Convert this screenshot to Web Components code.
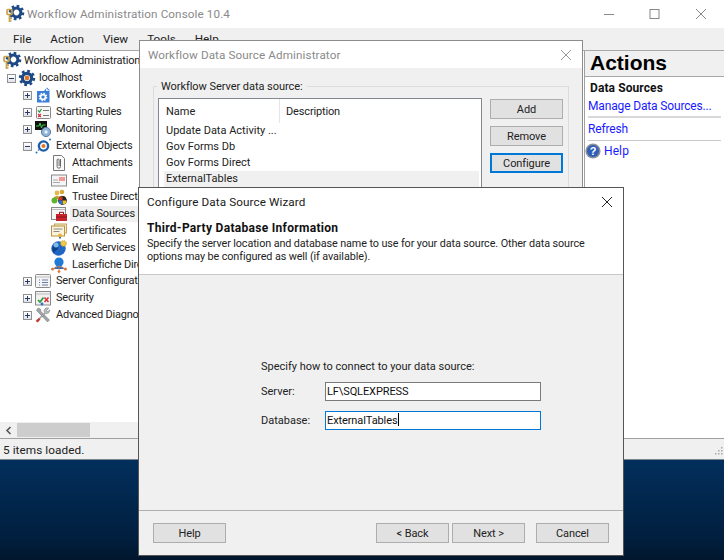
<!DOCTYPE html>
<html><head><meta charset="utf-8">
<style>
html,body{margin:0;padding:0;width:724px;height:560px;overflow:hidden;background:#01305f}
body{font:12px Roboto,sans-serif;color:#222}
</style></head><body>
<x-desktop>
  <x-main-window></x-main-window>
  <x-ds-admin></x-ds-admin>
  <x-wizard></x-wizard>
</x-desktop>
<script>
const FONT='Roboto,sans-serif';
const gear=(c,cx,cy,s)=>`<g transform="translate(${cx} ${cy}) scale(${s})"><circle r="6.6" fill="none" stroke="${c}" stroke-width="2.4" stroke-dasharray="2.6 2.58"/><circle r="4.4" fill="none" stroke="${c}" stroke-width="3"/></g>`;
const ICONS={
 app:`${gear('#1d4a86',10.5,6.5,1)}<circle cx="10.5" cy="6.5" r="1.8" fill="#fff"/><g fill="none" stroke="#c9a24a" stroke-width="1.7"><rect x="1" y="3.5" width="5" height="5" rx="1"/><path d="M3.5 8.5V16M3.5 12.5H6M3.5 15H5.5"/></g>`,
 local:`${gear('#1d4a86',8,8,1.05)}<circle cx="8" cy="8" r="2.4" fill="#e0742a"/>`,
 workflows:`<path d="M2 4 9 4 12 0.5 14.5 3V15.5H2Z" fill="#3b7fd8"/><path d="M11 1v3h3.5" fill="#dcecff"/>${gear('#fff',8,10,.55)}`,
 rules:`<rect x="1.5" y="2.5" width="14" height="12" rx="1" fill="#f6f6f6" stroke="#8a8a8a"/><path d="M3 6.5l1.5 1.5 2-3" stroke="#2a9a3a" stroke-width="1.2" fill="none"/><path d="M3.2 10l2.6 3M5.8 10l-2.6 3" stroke="#d8303a" stroke-width="1.2"/><path d="M8 6.5h6M8 11.5h6" stroke="#777"/>`,
 monitor:`<rect x="0" y="0" width="12" height="9" fill="#111"/><path d="M1 5h3l1-3 1.5 5 1-3h3" stroke="#3cd04a" fill="none"/><circle cx="11" cy="11" r="4.6" fill="#8fb4d8" stroke="#5c7c9e"/><circle cx="11" cy="11" r="1.7" fill="#e8f1fa"/>`,
 external:`<circle cx="8.5" cy="8" r="4.6" fill="#fff" stroke="#1d5fa8" stroke-width="2.4"/><circle cx="8.5" cy="8" r="2" fill="#e0742a"/><circle cx="15" cy="1.5" r="1" fill="#1d6fc8"/><circle cx="1.5" cy="14.5" r="1" fill="#1d6fc8"/><circle cx="3.5" cy="12" r=".8" fill="#1d6fc8"/>`,
 attach:`<path d="M2.5 .5h8l3 3v12h-11z" fill="#fafafa" stroke="#777"/><path d="M9.5 4v7.5a1.7 1.7 0 0 1-3.4 0V5a1 1 0 0 1 2 0v6" fill="none" stroke="#666"/>`,
 email:`<rect x=".5" y="3" width="15" height="11" fill="#f5f5f5" stroke="#8a8a8a"/><rect x="8" y="5" width="6" height="4" fill="#f29a9a"/><path d="M2 8h5M2 10.5h7" stroke="#aaa"/>`,
 trustee:`<circle cx="11" cy="3" r="2.3" fill="#d8a83a"/><path d="M7 9c0-3 8-3 8 0z" fill="#d8a83a"/><circle cx="6" cy="4" r="2.4" fill="#e6b84a"/><path d="M2.5 10c0-4 7-4 7 0z" fill="#c9962a"/><circle cx="3.5" cy="11.5" r="3" fill="#5fb32f"/><circle cx="11.5" cy="11.5" r="4.4" fill="#222"/><path d="M11.5 7.5v4h-4a4 4 0 0 1 4-4z" fill="#d8302a"/><path d="M11.5 11.5h4a4 4 0 0 1-4 4z" fill="#f2c21f"/><path d="M11.5 11.5v4a4 4 0 0 1-4-4z" fill="#2f6fd0"/>`,
 datasources:`<rect x=".5" y="1.5" width="14" height="12" fill="#f6f6f6" stroke="#8a8a8a"/><path d="M1 3.5h13" stroke="#bbb"/><rect x="5" y="8" width="11" height="7" fill="#c8242a"/><path d="M8.5 8V6.3h4V8" fill="none" stroke="#7e1216"/><path d="M5 11h11" stroke="#8c1519"/>`,
 cert:`<rect x="3.5" y="1" width="12" height="9" fill="#f6eacb" stroke="#c2a25a"/><rect x=".5" y="3" width="13" height="10" fill="#fbf3dc" stroke="#b8943f"/><path d="M2.5 6h9M2.5 8.5h6" stroke="#8a8a8a"/><circle cx="9" cy="12.5" r="2" fill="#e6b23a"/><path d="M8 14v2l1-1 1 1v-2" fill="#2d6bc4"/>`,
 web:`<circle cx="7.5" cy="8.5" r="7.2" fill="#1f66c2"/><path d="M2 6c3-3 6-1 5 2s-3 2-4 5C1 11 1 8 2 6z" fill="#0f3f86"/><circle cx="5" cy="5" r="2.5" fill="#7db7ee"/><circle cx="12.5" cy="3.5" r="2.8" fill="#eccb4a" stroke="#c89b22" stroke-dasharray="1.4 .8"/>`,
 laser:`<circle cx="8" cy="5" r="4.6" fill="#1f7ad8"/><path d="M3 12c0-4 10-4 10 0z" fill="#1f6ac0"/><g fill="#e07a3a"><circle cx="1.6" cy="12" r="1.6"/><circle cx="14.4" cy="12" r="1.6"/><circle cx="8" cy="14.6" r="1.4"/></g><path d="M2 12 8 9l6 3M8 9v5" stroke="#e07a3a" fill="none" stroke-width=".8"/>`,
 server:`<rect x=".5" y="1.5" width="15" height="13" rx="1" fill="#f4f4f6" stroke="#8a8a8a"/><path d="M1 4h14" stroke="#bbb"/><path d="M4 7h1M7 7h6M4 9.5h1M7 9.5h6M4 12h1M7 12h6" stroke="#6b7ea0"/>`,
 security:`<rect x=".5" y="1.5" width="15" height="13.5" fill="#f1f1f1" stroke="#8a8a8a"/><path d="M1 4h14" stroke="#bbb"/><path d="M3 10l2 2 3.5-4.5" stroke="#2a9a3a" stroke-width="1.6" fill="none"/><path d="M9.5 7.5l4 4.5M13.5 7.5l-4 4.5" stroke="#d8303a" stroke-width="1.5"/><circle cx="7" cy="14" r="1.4" fill="#2d6bc4"/>`,
 diag:`<path d="M3 1 1.5 3.5 4 6l8.5 9 2-2L6 4.5 5.5 2z" fill="#a0a4aa" stroke="#777" stroke-width=".5"/><path d="M13.8 1.2l-2.3 2.3 1 1 2.3-1.6a3.3 3.3 0 0 1-4.2 3.6L4.5 12l-2 3-1.5-1.5 3-2.2 5.4-5.6a3.3 3.3 0 0 1 4.4-4.5z" fill="#b7bbc0" stroke="#777" stroke-width=".5"/><path d="M1 14l3-3 1.5 1.5-3 3z" fill="#c8342c"/>`,
 help:`<circle cx="8" cy="8" r="7.6" fill="#8a8f98"/><circle cx="8" cy="8" r="6" fill="#2f5fb8"/><text x="8" y="12" text-anchor="middle" font-family="Liberation Sans" font-weight="700" font-size="11" fill="#fff">?</text>`
};
function sh(el,html){el.attachShadow({mode:'open'}).innerHTML=html;}
customElements.define('x-icon',class extends HTMLElement{connectedCallback(){
 const s=+(this.getAttribute('size')||16);
 sh(this,`<style>:host{display:inline-flex;flex:none;width:${s}px;height:${s}px}svg{display:block;width:100%;height:100%;overflow:visible}</style><svg viewBox="0 0 ${s} ${s}">${ICONS[this.getAttribute('name')]}</svg>`);
}});
customElements.define('x-desktop',class extends HTMLElement{connectedCallback(){
 sh(this,`<style>:host{display:block;position:relative;width:724px;height:560px;overflow:hidden;background:linear-gradient(#00315f 0,#022f5c 82%,#011f3f 96%,#01162c 100%);font:12px ${FONT};color:#222}</style><slot></slot>`);
}});
customElements.define('x-tree-row',class extends HTMLElement{connectedCallback(){
 const pad=this.getAttribute('pad'),exp=this.getAttribute('exp'),ic=this.getAttribute('icon'),sel=this.hasAttribute('sel');
 const gap=this.getAttribute('gap')||5;
 sh(this,`<style>:host{display:flex;align-items:center;height:16.93px;padding-left:${pad}px;white-space:nowrap;flex:none}
 .e{flex:none;box-sizing:border-box;width:9px;height:9px;margin-right:3px;border:1px solid #919191;background:linear-gradient(#fff,#dfe3ea);position:relative}
 .e.m::before,.e.p::before{content:"";position:absolute;left:1px;right:1px;top:3px;height:1px;background:#2b3a63}
 .e.p::after{content:"";position:absolute;top:1px;bottom:1px;left:3px;width:1px;background:#2b3a63}
 .t{margin-left:${gap}px;padding:0 2px;line-height:16px;font-size:11px;letter-spacing:-.2px}
 .t.s{background:#f0f0f0;padding-right:40px}</style>
 ${exp?`<span class="e ${exp}"></span>`:''}<x-icon name="${ic}"></x-icon><span class="t ${sel?'s':''}"><slot></slot></span>`);
}});
customElements.define('x-main-window',class extends HTMLElement{connectedCallback(){
 const rows=[['3','','app','Workflow Administration',3],['7','m','local','localhost',2],['23','p','workflows','Workflows'],['23','p','rules','Starting Rules'],['23','p','monitor','Monitoring'],['23','m','external','External Objects'],['51','','attach','Attachments'],['51','','email','Email'],['51','','trustee','Trustee Directories'],['51','','datasources','Data Sources',3,1],['51','','cert','Certificates'],['51','','web','Web Services'],['51','','laser','Laserfiche Directory'],['23','p','server','Server Configuration'],['23','p','security','Security'],['23','p','diag','Advanced Diagnostics']];
 sh(this,`<style>:host{position:absolute;left:0;top:0;width:724px;height:460px;display:flex;flex-direction:column;background:#fff;border-bottom:1px solid #7a8590;box-sizing:border-box}
 .tb{height:28px;display:flex;align-items:center;padding-left:6px;flex:none;background:#fff;color:#8a8a8a}
 .tb .name{margin-left:5px;font-size:11.7px;letter-spacing:.1px}
 .ctl{margin-left:auto;display:flex;align-items:center;color:#888}
 .ctl svg{display:block;width:46px;height:12px}
 .menu{height:23px;flex:none;background:#f0f0f0;border-bottom:1px solid #a8a8a8;box-sizing:border-box;display:flex;gap:19px;align-items:center;padding-left:13px;font-size:11.7px}
 .body{flex:1;display:flex;min-height:0}
 .tree{flex:1;min-width:0;display:flex;flex-direction:column;overflow:hidden}
 .rows{flex:1;display:flex;flex-direction:column;padding-top:2px}
 .hs{height:16px;background:#f0f0f0;flex:none;display:flex;align-items:center}
 .hs .arrow{width:17px;display:flex;justify-content:center}
 .hs .th{width:73px;height:14px;background:#cdcdcd}
 .act{width:139px;flex:none;border-left:1px solid #a0a0a0;display:flex;flex-direction:column;background:#fff}
 .ah{height:25px;background:#f0f0f0;border-bottom:1px solid #a8a8a8;font:700 21px "Liberation Sans",sans-serif;color:#000;padding-left:5px;line-height:24px;flex:none}
 .sec{font-weight:700;color:#111;padding:1px 0 0 5px;line-height:20px;height:20px;font-size:12px;letter-spacing:.1px}
 a{color:#1a1aff;text-decoration:none;display:block;padding-left:3px;line-height:16px;letter-spacing:-.15px}
 .hr{height:1px;background:#c8c8c8;margin:3px 3px 2px 3px}
 .hr.b{height:2px;background:#d8d8d8;margin:2px 3px 3px 3px}
 .help{display:flex;align-items:center;gap:2px}
 .help a{padding-left:1px;letter-spacing:.1px}
 .status{height:21px;flex:none;background:#f0f0f0;border-top:1px solid #a0a0a0;box-sizing:border-box;padding-left:3px;line-height:22px;display:flex;font-size:11.8px;letter-spacing:.05px}
 .grip{margin-left:auto;margin-top:6px;width:12px;height:12px}
 </style>
 <div class="tb"><x-icon name="app" size="16"></x-icon><span class="name">Workflow Administration Console 10.4</span>
  <div class="ctl"><svg viewBox="0 0 46 12"><path d="M18 6.5h10" stroke="#888"/></svg><svg viewBox="0 0 46 12"><rect x="18" y="1.5" width="9" height="9" fill="none" stroke="#888"/></svg><svg viewBox="0 0 46 12"><path d="M18 1l10 10M28 1L18 11" stroke="#888" fill="none"/></svg></div></div>
 <div class="menu"><span>File</span><span>Action</span><span>View</span><span>Tools</span><span>Help</span></div>
 <div class="body"><div class="tree"><div class="rows">${rows.map(r=>`<x-tree-row pad="${r[0]}" ${r[1]?`exp="${r[1]}"`:''} icon="${r[2]}" gap="${r[4]||3}" ${r[5]?'sel':''}>${r[3]}</x-tree-row>`).join('')}</div>
 <div class="hs"><span class="arrow"><svg width="7" height="9" viewBox="0 0 7 9"><path d="M5.5 1 2 4.5 5.5 8" fill="none" stroke="#555" stroke-width="1.6"/></svg></span><span class="th"></span></div></div>
 <div class="act"><div class="ah">Actions</div><div class="sec">Data Sources</div><a>Manage Data Sources...</a><div class="hr b"></div><a>Refresh</a><div class="hr"></div><div class="help"><x-icon name="help" size="16"></x-icon><a>Help</a></div></div></div>
 <div class="status">5 items loaded.<svg class="grip" viewBox="0 0 12 12"><path d="M9 2h1.5v1.5H9zM6 5h1.5v1.5H6zM9 5h1.5v1.5H9zM3 8h1.5v1.5H3zM6 8h1.5v1.5H6zM9 8h1.5v1.5H9z" fill="#aaa"/></svg></div>`);
}});
customElements.define('x-btn',class extends HTMLElement{connectedCallback(){
 const f=this.hasAttribute('focus');
 sh(this,`<style>:host{display:flex;align-items:center;justify-content:center;box-sizing:border-box;width:73px;height:20px;background:#e1e1e1;border:${f?'2px solid #0078d7':'1px solid #adadad'};color:#222;flex:none;line-height:1;font-size:11px;letter-spacing:-.1px}</style><slot></slot>`);
}});
customElements.define('x-ds-admin',class extends HTMLElement{connectedCallback(){
 sh(this,`<style>:host{position:absolute;left:139px;top:40px;width:444px;height:300px;box-sizing:border-box;background:#f0f0f0;border:1px solid #8c8c8c;display:flex;flex-direction:column}
 .t{height:27px;flex:none;background:#fff;display:flex;align-items:center;padding-left:8px;color:#8a8a8a;font-size:11.7px;letter-spacing:.1px}
 .t svg{margin-left:auto;margin-right:10px}
 .g{position:relative;margin:18px 13px 0 13px;border:1px solid #dcdcdc;flex:1;display:flex;gap:8px;padding:11px 5px 0 4px;font-size:11px}
 .lg{position:absolute;left:3px;top:-9px;background:#f0f0f0;padding:0 4px;line-height:17px;letter-spacing:-.05px}
 .list{flex:1;background:#fff;border:1px solid #828790;min-width:0;height:200px;box-sizing:border-box}
 .hd{display:flex;height:24px;align-items:center}
 .hd span{padding-left:7px;line-height:25px}.hd .n{width:113px;border-right:1px solid #e5e5e5;height:24px}
 .hd span+span{padding-left:6px;letter-spacing:-.15px}
 .rs{padding:0 2px 0 5px}
 .r{height:16px;line-height:16px;padding-left:2px}
 .r.s{background:#f0f0f0;height:17px}
 .btns{width:73px;flex:none;display:flex;flex-direction:column;gap:7px;padding-top:1px}
 </style><div class="t">Workflow Data Source Administrator<svg width="12" height="12" viewBox="0 0 12 12"><path d="M1 1l10 10M11 1 1 11" stroke="#999" fill="none"/></svg></div>
 <div class="g"><span class="lg">Workflow Server data source:</span>
 <div class="list"><div class="hd"><span class="n">Name</span><span>Description</span></div>
 <div class="rs"><div class="r">Update Data Activity ...</div><div class="r">Gov Forms Db</div><div class="r">Gov Forms Direct</div><div class="r s">ExternalTables</div></div></div>
 <div class="btns"><x-btn>Add</x-btn><x-btn>Remove</x-btn><x-btn focus>Configure</x-btn></div></div>`);
}});
customElements.define('x-wizard',class extends HTMLElement{connectedCallback(){
 sh(this,`<style>:host{position:absolute;left:138px;top:187px;width:486px;height:369px;box-sizing:border-box;background:#f0f0f0;border:1px solid #555;display:flex;flex-direction:column;font-size:11px}
 .hdr{height:86px;flex:none;background:#fff;border-bottom:1px solid #c8c8c8;display:flex;flex-direction:column;padding-left:8px}
 .t{height:27px;display:flex;align-items:center;color:#1a1a1a;flex:none;font-size:11.7px;letter-spacing:.1px}
 .t svg{margin-left:auto;margin-right:10px}
 .h{font-weight:700;color:#111;margin-top:5px;line-height:16px;letter-spacing:.3px;font-size:12px}
 .d{line-height:13px;font-size:10.8px;color:#222;margin-top:1px;white-space:nowrap;letter-spacing:-.1px}
 .body{flex:1;border-bottom:1px solid #b0b0b0;display:flex;flex-direction:column;padding:85px 0 0 122px;box-sizing:border-box;min-height:0}
 .fr{display:grid;grid-template-columns:64px 216px;align-items:center;row-gap:10px;margin-top:9px}
 .in{box-sizing:border-box;height:19px;background:#fff;border:1px solid #7a7a7a;padding-left:1px;line-height:17px;color:#111;letter-spacing:-.1px}
 .in.f{border-color:#0078d7}
 .c{display:inline-block;width:1px;height:13px;background:#000;vertical-align:-2px}
 .ft{height:44px;flex:none;display:flex;align-items:flex-start;padding:12px 0 0 14px;box-sizing:border-box}
 </style>
 <div class="hdr"><div class="t">Configure Data Source Wizard<svg width="12" height="12" viewBox="0 0 12 12"><path d="M1 1l10 10M11 1 1 11" stroke="#222" fill="none"/></svg></div>
 <div class="h">Third-Party Database Information</div><div class="d">Specify the server location and database name to use for your data source. Other data source<br>options may be configured as well (if available).</div></div>
 <div class="body"><div>Specify how to connect to your data source:</div>
 <div class="fr"><span>Server:</span><div class="in">LF\\SQLEXPRESS</div><span>Database:</span><div class="in f">ExternalTables<span class="c"></span></div></div></div>
 <div class="ft"><x-btn>Help</x-btn><x-btn style="margin-left:150px">&lt; Back</x-btn><x-btn style="margin-left:3px">Next &gt;</x-btn><x-btn style="margin-left:11px">Cancel</x-btn></div>`);
}});
</script>
</body></html>
